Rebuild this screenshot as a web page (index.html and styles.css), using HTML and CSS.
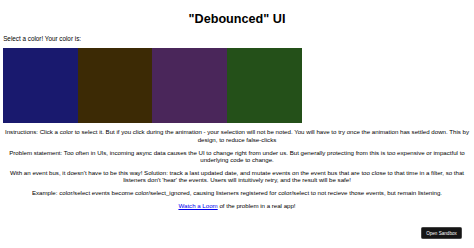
FILE: index.html
```html
<!DOCTYPE html>
<html>
<head>
<meta charset="utf-8">
<title>"Debounced" UI</title>
<link rel="stylesheet" href="styles.css">
</head>
<body>
  <h1 class="title">"Debounced" UI</h1>
  <p class="lead">Select a color! Your color is: </p>
  <div class="swatches">
    <div class="swatch swatch-blue"></div>
    <div class="swatch swatch-brown"></div>
    <div class="swatch swatch-purple"></div>
    <div class="swatch swatch-green"></div>
  </div>
  <div class="notes">
    <p>Instructions: Click a color to select it. But if you click during the animation - your selection will not be noted. You will have to try once the animation has settled down. This by design, to reduce false-clicks</p>
    <p>Problem statement: Too often in UIs, incoming async data causes the UI to change right from under us. But generally protecting from this is too expensive or impactful to underlying code to change.</p>
    <p>With an event bus, it doesn't have to be this way! Solution: track a last updated date, and mutate events on the event bus that are too close to that time in a filter, so that listeners don't 'hear' the events. Users will intuitively retry, and the result will be safe!</p>
    <p>Example: color/select events become color/select_ignored, causing listeners registered for color/select to not recieve those events, but remain listening.</p>
    <p><a class="link" href="#">Watch a Loom</a> of the problem in a real app!</p>
  </div>
  <a class="sandbox-btn" href="#">Open Sandbox</a>
</body>
</html>
```
FILE: styles.css
```css
html, body {
  background: #ffffff;
}
body {
  margin: 3.16px;
  font-family: "Liberation Sans", Arial, Helvetica, sans-serif;
  font-size: 6.32px;
  line-height: 7.27px;
  color: #000000;
}
.title {
  font-size: 12.64px;
  line-height: 14.5px;
  font-weight: bold;
  text-align: center;
  margin: 8.47px 0;
}
.lead {
  margin: 6.32px 0;
}
.swatches {
  display: flex;
}
.swatch {
  width: 74.6px;
  height: 74.6px;
}
.swatch-blue { background: #19196e; }
.swatch-brown { background: #3c2a05; }
.swatch-purple { background: #4a265a; }
.swatch-green { background: #245019; }
.notes {
  text-align: center;
  font-size: 6.15px;
  letter-spacing: -0.01px;
}
.notes p {
  margin: 5.7px 0;
}
.link {
  color: #0000ee;
  text-decoration: underline;
}
.sandbox-btn {
  position: fixed;
  right: 12px;
  bottom: 9px;
  width: 41px;
  height: 12px;
  display: flex;
  align-items: center;
  justify-content: center;
  background: #151515;
  color: #ffffff;
  border: 0.5px solid #444444;
  border-radius: 1.5px;
  font-size: 4.6px;
  line-height: 5px;
  text-decoration: none;
  box-sizing: border-box;
}
```
